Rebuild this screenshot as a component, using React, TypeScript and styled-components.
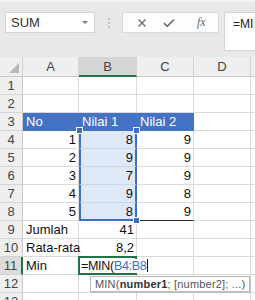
import React from 'react';
import styled, { createGlobalStyle, css } from 'styled-components';

const GlobalStyle = createGlobalStyle`
    html, body {
        margin: 0;
        padding: 0;
        background: #ffffff;
    }
    body {
        font-family: "Liberation Sans", Arial, sans-serif;
    }
`;

const Page = styled.div`
    width: 255px;
    height: 300px;
    overflow: hidden;
    background: #ffffff;
`;

const TopBar = styled.div`
    height: 57px;
    background: #e8e8e8;
    border-top: 2px solid #f4f4f4;
    box-sizing: border-box;
    display: flex;
    align-items: flex-start;
    padding: 10px 0 0 5px;
`;

const NameBox = styled.div`
    width: 90px;
    height: 21px;
    box-sizing: border-box;
    background: #ffffff;
    border: 1px solid #d4d4d4;
    display: flex;
    align-items: center;
    justify-content: space-between;
    padding: 0 6px 0 5px;
    font-size: 13px;
    color: #333333;
`;

const DropArrow = styled.span`
    width: 0;
    height: 0;
    border-left: 3px solid transparent;
    border-right: 3px solid transparent;
    border-top: 3px solid #7a7a7a;
`;

const Grip = styled.div`
    width: 27px;
    height: 21px;
    display: flex;
    flex-direction: column;
    align-items: center;
    justify-content: center;
    gap: 2px;
`;

const GripDot = styled.span`
    width: 2px;
    height: 2px;
    background: #c4c4c4;
`;

const FormulaButtons = styled.div`
    width: 97px;
    height: 21px;
    box-sizing: border-box;
    background: #fdfdfd;
    border: 1px solid #d8d8d8;
    display: flex;
    align-items: center;
    padding-left: 14px;
    gap: 16px;
`;

const FxLabel = styled.span`
    font-family: "Liberation Serif", "Times New Roman", serif;
    font-style: italic;
    font-size: 12px;
    color: #6a6a6a;
    margin-left: 6px;
`;

const FormulaInput = styled.div`
    margin-left: 5px;
    flex: 1;
    height: 39px;
    box-sizing: border-box;
    background: #ffffff;
    border: 1px solid #d4d4d4;
    border-right: none;
    padding: 4px 0 0 8px;
    font-size: 12px;
    color: #222222;
`;

const Sheet = styled.div`
    display: grid;
    grid-template-columns: 23px 56px 58px 57px 57px 1fr;
    grid-template-rows: 20px repeat(13, 18px);
    font-size: 13px;
    color: #111111;
`;

const Corner = styled.div`
    background: #efefef;
    border-right: 1px solid #d0d0d0;
    border-bottom: 1px solid #c8c8c8;
    box-sizing: border-box;
    display: flex;
    align-items: flex-end;
    justify-content: flex-end;
    padding: 0 3px 3px 0;
`;

const ColHeader = styled.div<{ $active?: boolean }>`
    background: ${p => (p.$active ? '#d6d6d6' : '#efefef')};
    border-right: 1px solid #d4d4d4;
    border-bottom: ${p => (p.$active ? '2px solid #217346' : '1px solid #c8c8c8')};
    box-sizing: border-box;
    display: flex;
    align-items: center;
    justify-content: center;
    color: #444444;
    font-size: 13px;
`;

const RowHeader = styled.div<{ $active?: boolean }>`
    background: ${p => (p.$active ? '#dcdcdc' : '#efefef')};
    border-right: ${p => (p.$active ? '2px solid #217346' : '1px solid #c8c8c8')};
    border-bottom: 1px solid #d4d4d4;
    box-sizing: border-box;
    display: flex;
    align-items: center;
    justify-content: center;
    color: #444444;
    font-size: 13px;
`;

type CellKind = 'plain' | 'head' | 'sel' | 'selLast';

const Cell = styled.div<{ $kind?: CellKind; $right?: boolean; $under?: boolean }>`
    position: relative;
    box-sizing: border-box;
    border-right: 1px solid #dadada;
    border-bottom: 1px solid #dadada;
    display: flex;
    align-items: center;
    justify-content: ${p => (p.$right ? 'flex-end' : 'flex-start')};
    padding: 0 2px 0 3px;
    white-space: nowrap;
    ${p => p.$kind === 'head' && css`
        background: #4472c4;
        color: #ffffff;
        border-right-color: #4472c4;
        border-bottom-color: #4472c4;
    `}
    ${p => (p.$kind === 'sel' || p.$kind === 'selLast') && css`
        background: #dfe8f6;
        border-left: 2px solid #3f6fc4;
        border-right: 2px solid #3f6fc4;
        border-bottom-color: #c9d5e8;
    `}
    ${p => p.$kind === 'selLast' && css`
        border-bottom: 2px solid #3f6fc4;
    `}
    ${p => p.$under && css`
        border-bottom: 1px solid #2a2a2a;
    `}
`;

const Handle = styled.span<{ $pos: 'tl' | 'tr' | 'br' }>`
    position: absolute;
    width: 5px;
    height: 5px;
    background: #3f6fc4;
    border: 1px solid #ffffff;
    z-index: 2;
    ${p => p.$pos === 'tl' && css`top: -4px; left: -5px;`}
    ${p => p.$pos === 'tr' && css`top: -4px; right: -5px;`}
    ${p => p.$pos === 'br' && css`bottom: -5px; right: -5px;`}
`;

const ActiveCell = styled.div`
    position: relative;
    z-index: 3;
    box-sizing: border-box;
    border: 2px solid #217346;
    margin: -1px 0 0 -1px;
    display: flex;
    align-items: center;
    padding-left: 1px;
    white-space: nowrap;
    overflow: visible;
    background: #ffffff;
    font-size: 12.5px;
    letter-spacing: -0.3px;
`;

const EditText = styled.span`
    background: #ffffff;
    padding-right: 2px;
`;

const RefText = styled.span`
    color: #3b6fc7;
`;

const Caret = styled.span`
    display: inline-block;
    width: 1px;
    height: 13px;
    background: #111111;
    vertical-align: -2px;
    margin-left: 1px;
`;

const Tooltip = styled.div`
    position: absolute;
    top: 1px;
    left: 11px;
    z-index: 4;
    height: 16px;
    box-sizing: border-box;
    padding: 0 4px;
    background: #ffffff;
    border: 1px solid #bcbcbc;
    box-shadow: 1px 1px 1px rgba(0, 0, 0, 0.12);
    display: flex;
    align-items: center;
    font-size: 11px;
    letter-spacing: 0.2px;
    color: #555555;
    white-space: nowrap;
`;

const Bold = styled.b`
    color: #333333;
`;

const CloseIcon = () => (
    <svg width="10" height="10" viewBox="0 0 10 10">
        <path d="M1.5 1.5 L8.5 8.5 M8.5 1.5 L1.5 8.5" stroke="#6d6d6d" strokeWidth="1.4" />
    </svg>
);

const CheckIcon = () => (
    <svg width="12" height="10" viewBox="0 0 12 10">
        <path d="M1 5.2 L4.3 8.3 L11 1.5" stroke="#6d6d6d" strokeWidth="1.6" fill="none" />
    </svg>
);

const CornerMark = () => (
    <svg width="10" height="10" viewBox="0 0 10 10">
        <path d="M10 0 L10 10 L0 10 Z" fill="#b8b8b8" />
    </svg>
);

const cols = ['A', 'B', 'C', 'D', ''];

const data = [
    { no: 1, b: 8, c: 9 },
    { no: 2, b: 9, c: 9 },
    { no: 3, b: 7, c: 9 },
    { no: 4, b: 9, c: 8 },
    { no: 5, b: 8, c: 9 },
];

const Empty = ({ n }: { n: number }) => (
    <>
        {Array.from({ length: n }).map((_, i) => <Cell key={ i } />)}
    </>
);

export default function App() {
    return (
        <Page>
            <GlobalStyle />
            <TopBar>
                <NameBox>
                    SUM
                    <DropArrow />
                </NameBox>
                <Grip>
                    <GripDot />
                    <GripDot />
                    <GripDot />
                </Grip>
                <FormulaButtons>
                    <CloseIcon />
                    <CheckIcon />
                    <FxLabel>fx</FxLabel>
                </FormulaButtons>
                <FormulaInput>=MI</FormulaInput>
            </TopBar>

            <Sheet>
                <Corner><CornerMark /></Corner>
                {cols.map((c, i) => (
                    <ColHeader key={ i } $active={ c === 'B' }>{c}</ColHeader>
                ))}

                <RowHeader>1</RowHeader>
                <Empty n={ 5 } />

                <RowHeader>2</RowHeader>
                <Empty n={ 5 } />

                <RowHeader>3</RowHeader>
                <Cell $kind="head">No</Cell>
                <Cell $kind="head">Nilai 1</Cell>
                <Cell $kind="head">Nilai 2</Cell>
                <Empty n={ 2 } />

                {data.map((row, i) => {
                    const last = i === data.length - 1;
                    return (
                        <React.Fragment key={ row.no }>
                            <RowHeader>{row.no + 3}</RowHeader>
                            <Cell $right>{row.no}</Cell>
                            <Cell $right $kind={ last ? 'selLast' : 'sel' }>
                                {row.b}
                                {i === 0 && <Handle $pos="tl" />}
                                {i === 0 && <Handle $pos="tr" />}
                                {last && <Handle $pos="br" />}
                            </Cell>
                            <Cell $right $under={ last }>{row.c}</Cell>
                            <Empty n={ 2 } />
                        </React.Fragment>
                    );
                })}

                <RowHeader>9</RowHeader>
                <Cell>Jumlah</Cell>
                <Cell $right>41</Cell>
                <Empty n={ 3 } />

                <RowHeader>10</RowHeader>
                <Cell>Rata-rata</Cell>
                <Cell $right>8,2</Cell>
                <Empty n={ 3 } />

                <RowHeader $active>11</RowHeader>
                <Cell>Min</Cell>
                <ActiveCell>
                    <EditText>
                        =MIN(<RefText>B4:B8</RefText><Caret />
                    </EditText>
                </ActiveCell>
                <Empty n={ 3 } />

                <RowHeader>12</RowHeader>
                <Cell />
                <Cell>
                    <Tooltip>
                        MIN(<Bold>number1</Bold>; [number2]; ...)
                    </Tooltip>
                </Cell>
                <Empty n={ 3 } />

                <RowHeader>13</RowHeader>
                <Empty n={ 5 } />
            </Sheet>
        </Page>
    );
}
